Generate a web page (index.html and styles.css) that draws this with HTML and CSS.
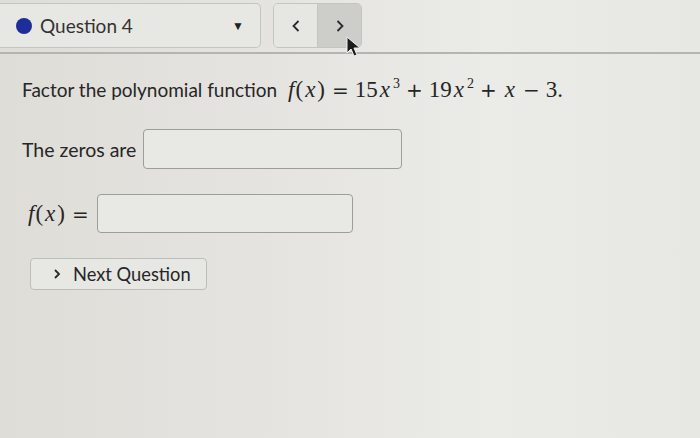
FILE: index.html
```html
<!DOCTYPE html>
<html lang="en">
<head>
<meta charset="utf-8">
<title>Question 4</title>
<link rel="stylesheet" href="styles.css">
</head>
<body>
<div class="page">
  <header class="topbar">
    <div class="qselect">
      <span class="dot"></span>
      <span class="qlabel">Question 4</span>
      <span class="caret">&#9660;</span>
    </div>
    <div class="nav">
      <button class="navbtn prev" type="button">
        <svg width="10" height="14" viewBox="0 0 10 14"><path d="M7.5 2 L2.5 7 L7.5 12" fill="none" stroke="#2a2a2a" stroke-width="1.8"/></svg>
      </button>
      <button class="navbtn next" type="button">
        <svg width="10" height="14" viewBox="0 0 10 14"><path d="M2.5 2 L7.5 7 L2.5 12" fill="none" stroke="#2a2a2a" stroke-width="1.8"/></svg>
      </button>
      <svg class="pointer" width="16" height="22" viewBox="0 0 16 22"><path d="M1 1 L1 17 L5 13 L8 20 L11 19 L8 12 L14 12 Z" fill="#1c1c1c" stroke="#f2f2f2" stroke-width="1"/></svg>
    </div>
  </header>
  <main class="content">
    <p class="prompt">Factor the polynomial function <span class="math inline"><i>f</i>(<i class="v">x</i>)<span class="rel">=</span>15<i class="v">x</i><sup>3</sup><span class="bin">+</span>19<i class="v">x</i><sup>2</sup><span class="bin">+</span><i class="v">x</i><span class="bin">−</span>3.</span></p>
    <div class="row zeros">
      <span class="label">The zeros are</span>
      <span class="field wide"></span>
    </div>
    <div class="row fx">
      <span class="math"><i>f</i>(<i class="v">x</i>)<span class="rel">=</span></span>
      <span class="field"></span>
    </div>
    <button class="next-q" type="button">
      <svg width="8" height="12" viewBox="0 0 8 12"><path d="M2 2 L6 6 L2 10" fill="none" stroke="#2a2a2a" stroke-width="1.8"/></svg>
      <span>Next Question</span>
    </button>
  </main>
</div>
</body>
</html>
```
FILE: styles.css
```css
html, body {
  margin: 0;
  padding: 0;
}
body {
  width: 700px;
  height: 438px;
  overflow: hidden;
  background: linear-gradient(90deg, #dfddd8 0%, #e5e4e0 40%, #ebebe8 70%, #e7e7e4 100%);
  font-family: Lato, "Noto Sans", sans-serif;
  color: #262626;
}
.page {
  width: 700px;
  height: 438px;
}
.topbar {
  display: flex;
  align-items: flex-start;
  gap: 12px;
  padding-top: 3px;
  border-bottom: 2px solid #b4b4b1;
  box-sizing: border-box;
  height: 54px;
}
.qselect {
  width: 261px;
  height: 45px;
  box-sizing: border-box;
  border: 1.5px solid #c4c4c1;
  border-left: none;
  border-radius: 0 5px 5px 0;
  display: flex;
  align-items: center;
  padding-left: 16px;
  padding-right: 16px;
  background: #e7e7e4;
}
.dot {
  width: 16px;
  height: 16px;
  border-radius: 50%;
  background: #1c2e9a;
  margin-right: 8px;
}
.qlabel {
  font-size: 19px;
  color: #333;
  flex: 1;
}
.caret {
  font-size: 12px;
  color: #222;
}
.nav {
  position: relative;
  display: flex;
  width: 89px;
  height: 45px;
  box-sizing: border-box;
  border: 1.5px solid #c4c4c1;
  border-radius: 5px;
}
.navbtn {
  flex: 1;
  margin: 0;
  padding: 0;
  border: none;
  display: flex;
  align-items: center;
  justify-content: center;
  background: #e6e6e3;
}
.navbtn.prev {
  border-radius: 4px 0 0 4px;
  border-right: 1.5px solid #c4c4c1;
}
.navbtn.next {
  background: #cdcdca;
  border-radius: 0 4px 4px 0;
}
.pointer {
  position: absolute;
  left: 72px;
  top: 32px;
}
.content {
  padding-left: 22px;
}
.prompt {
  margin: 0;
  padding-top: 24px;
  font-size: 19px;
  line-height: 24px;
  white-space: nowrap;
}
.math {
  font-family: "Liberation Serif", serif;
  font-size: 23px;
}
.math.inline {
  margin-left: 5px;
}
.math i {
  font-family: "Liberation Serif", serif;
  font-size: 23px;
  padding: 0 1px;
}
.math i.v {
  padding: 0 2px;
}
.math .rel {
  font-family: "DejaVu Sans", sans-serif;
  font-size: 20px;
  margin: 0 6px 0 7px;
}
.math .bin {
  font-family: "DejaVu Sans", sans-serif;
  font-size: 20px;
  margin: 0 6px;
}
.math sup {
  font-size: 14px;
  vertical-align: 9px;
  line-height: 0;
  margin-left: 1px;
}
.row {
  display: flex;
  align-items: center;
}
.zeros {
  margin-top: 27px;
  gap: 7px;
}
.label {
  font-size: 19.5px;
}
.field {
  display: block;
  width: 256px;
  height: 39px;
  box-sizing: border-box;
  border: 1.5px solid #9d9d9a;
  border-radius: 4px;
  background: #e8e8e5;
}
.field.wide {
  width: 259px;
  height: 40px;
}
.fx {
  margin-top: 25px;
  padding-left: 5px;
  gap: 2px;
}
.next-q {
  margin: 25px 0 0 8px;
  width: 177px;
  height: 32px;
  box-sizing: border-box;
  border: 1.5px solid #bdbdba;
  border-radius: 4px;
  background: #e7e7e4;
  display: flex;
  align-items: center;
  gap: 12px;
  padding: 0 0 0 22px;
  font-family: Lato, "Noto Sans", sans-serif;
  font-size: 18.3px;
  color: #262626;
}
```
